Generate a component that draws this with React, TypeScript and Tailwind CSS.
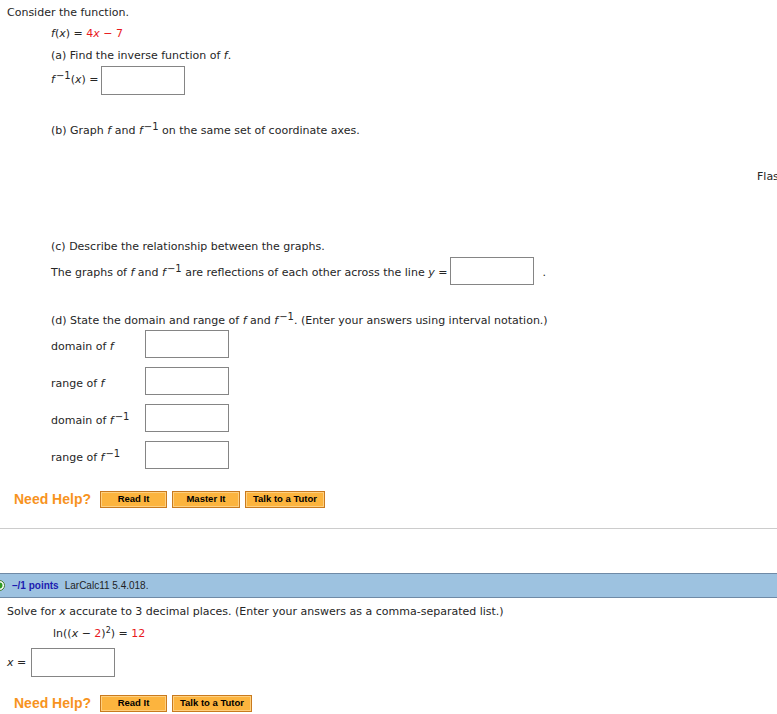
import React from "react";

const Inv = () => (
  <>
    <i>f</i>
    <span className="relative top-[-4px] text-[10px] leading-none ml-[1px]">−1</span>
  </>
);

const Box = () => <div className="w-[84px] h-[29px] border border-[#858585] bg-white shrink-0" />;

const HelpButton = ({ label, w }: { label: string; w: string }) => (
  <div
    className={`${w} h-[17px] flex items-center justify-center border border-[#c97a1e] bg-[#fcb43e] shadow-[inset_0_0_0_1px_#fed080] text-[9.5px] font-bold text-black font-['Liberation_Sans',Arial,sans-serif]`}
  >
    {label}
  </div>
);

const NeedHelp = ({ master = true }: { master?: boolean }) => (
  <div className="flex items-center h-[20px] pl-[14px]">
    <span className="w-[86px] text-[14px] font-bold text-[#f7931e] font-['Liberation_Sans',Arial,sans-serif]">
      Need Help?
    </span>
    <div className="flex gap-[5px]">
      <HelpButton label="Read It" w="w-[67px]" />
      {master && <HelpButton label="Master It" w="w-[68px]" />}
      <HelpButton label="Talk to a Tutor" w="w-[80px]" />
    </div>
  </div>
);

export default function App() {
  return (
    <div className="w-[777px] h-[714px] overflow-hidden bg-white text-[#262626] text-[11px] font-['DejaVu_Sans',Verdana,sans-serif]">
      <div className="pl-[7px]">
        <div className="h-[24px] pt-[2px] flex items-center">Consider the function.</div>
        <div className="ml-[44px]">
          <div className="h-[18px] pt-[2px] flex items-center">
            <i>f</i>(<i>x</i>)&nbsp;=&nbsp;<span className="text-[#e8191d]">4<i>x</i> − 7</span>
          </div>
          <div className="mt-[2px] h-[22px] pt-[3px] flex items-center">
            (a) Find the inverse function of&nbsp;<i>f</i>.
          </div>
          <div className="h-[29px] flex items-center">
            <span>
              <Inv />(<i>x</i>) =
            </span>
            <div className="ml-[3px]">
              <Box />
            </div>
          </div>
          <div className="mt-[26px] h-[16px] pt-[4px] flex items-center">
            <span>
              (b) Graph <i>f</i> and <Inv /> on the same set of coordinate axes.
            </span>
          </div>
        </div>
        <div className="mt-[31px] h-[16px] pt-[2px] flex items-center whitespace-nowrap overflow-hidden">
          <span className="ml-[750px]">Flash</span>
        </div>
        <div className="ml-[44px]">
          <div className="mt-[53px] h-[16px] pt-[4px] flex items-center">
            (c) Describe the relationship between the graphs.
          </div>
          <div className="mt-[4px] h-[28px] flex items-center">
            <span className="relative top-[2px]">
              The graphs of <i>f</i> and <Inv /> are reflections of each other across the line <i>y</i> =
            </span>
            <div className="ml-[3px]">
              <div className="w-[84px] h-[28px] border border-[#858585]" />
            </div>
            <span className="ml-[8px] relative top-[2px]">.</span>
          </div>
          <div className="mt-[26px] h-[16px] pt-[4px] flex items-center">
            <span>
              (d) State the domain and range of <i>f</i> and <Inv />. (Enter your answers using interval notation.)
            </span>
          </div>
          {[
            { label: <>domain of <i>f</i></>, mt: "mt-[3px]" },
            { label: <>range of <i>f</i></>, mt: "mt-[9px]" },
            { label: <>domain of <Inv /></>, mt: "mt-[9px]" },
            { label: <>range of <Inv /></>, mt: "mt-[9px]" },
          ].map((r, i) => (
            <div key={i} className={`${r.mt} h-[28px] flex items-center`}>
              <span className="w-[94px] relative top-[3px]">{r.label}</span>
              <div className="w-[84px] h-[28px] border border-[#858585]" />
            </div>
          ))}
        </div>
      </div>

      <div className="mt-[20px]">
        <NeedHelp />
      </div>

      <div className="mt-[19px] border-t border-[#cccccc]" />

      <div className="mt-[44px] h-[25px] flex items-center bg-[#9dc2e0] border-y border-[#6f8aa6] font-['Liberation_Sans',Arial,sans-serif] text-[10px]">
        <svg width="11" height="11" viewBox="0 0 11 11" className="-ml-[6px] shrink-0">
          <circle cx="5.5" cy="5.5" r="5" fill="#ffffff" stroke="#3a7a2a" strokeWidth="1" />
          <circle cx="5.5" cy="5.5" r="3" fill="#2e9a22" />
        </svg>
        <span className="ml-[7px] font-bold text-[#1c1cb0]">–/1 points</span>
        <span className="ml-[6px] text-[#1f1f1f]">LarCalc11 5.4.018.</span>
      </div>

      <div className="pl-[7px]">
        <div className="mt-[4px] h-[16px] pt-[4px] flex items-center">
          <span>
            Solve for <i>x</i> accurate to 3 decimal places. (Enter your answers as a comma-separated list.)
          </span>
        </div>
        <div className="ml-[46px] mt-[6px] h-[16px] pt-[4px] flex items-center">
          <span>
            ln((<i>x</i> − <span className="text-[#e8191d]">2</span>)
            <span className="relative top-[-4px] text-[8px] leading-none">2</span>) ={" "}
            <span className="text-[#e8191d]">12</span>
          </span>
        </div>
        <div className="mt-[8px] h-[29px] flex items-center">
          <span className="relative top-[1px]">
            <i>x</i> =
          </span>
          <div className="ml-[5px]">
            <Box />
          </div>
        </div>
      </div>

      <div className="mt-[16px]">
        <NeedHelp master={false} />
      </div>
    </div>
  );
}
